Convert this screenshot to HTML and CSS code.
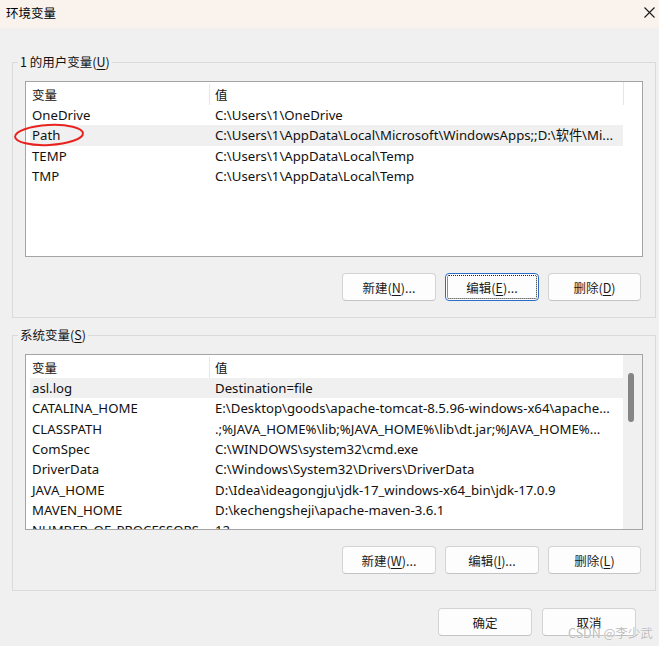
FILE: index.html
```html
<!DOCTYPE html>
<html lang="zh-CN">
<head>
<meta charset="utf-8">
<title>环境变量</title>
<link rel="stylesheet" href="styles.css">
</head>
<body>
<div class="window">
  <div class="titlebar">
    <span class="title">环境变量</span>
    <svg class="close" width="11" height="11" viewBox="0 0 11 11"><path d="M0.5 0.5L10.5 10.5M10.5 0.5L0.5 10.5" stroke="#1a1a1a" stroke-width="1.1" fill="none"/></svg>
  </div>
  <div class="content">
    <fieldset class="group">
      <legend>1 的用户变量(<u>U</u>)</legend>
      <div class="list">
        <div class="cols">
          <div class="header"><div class="c1">变量</div><div class="c2">值</div></div>
          <div class="row"><div class="c1">OneDrive</div><div class="c2">C:\Users\1\OneDrive</div></div>
          <div class="row sel"><div class="c1">Path</div><div class="c2">C:\Users\1\AppData\Local\Microsoft\WindowsApps;;D:\软件\Mi...</div></div>
          <div class="row"><div class="c1">TEMP</div><div class="c2">C:\Users\1\AppData\Local\Temp</div></div>
          <div class="row"><div class="c1">TMP</div><div class="c2">C:\Users\1\AppData\Local\Temp</div></div>
        </div>
        <div class="side"><div class="side-head"></div></div>
      </div>
      <div class="buttons">
        <button class="btn">新建(<u>N</u>)...</button>
        <button class="btn focus">编辑(<u>E</u>)...</button>
        <button class="btn last">删除(<u>D</u>)</button>
      </div>
    </fieldset>
    <fieldset class="group second">
      <legend>系统变量(<u>S</u>)</legend>
      <div class="list">
        <div class="cols">
          <div class="header"><div class="c1">变量</div><div class="c2">值</div></div>
          <div class="row sel"><div class="c1">asl.log</div><div class="c2">Destination=file</div></div>
          <div class="row"><div class="c1">CATALINA_HOME</div><div class="c2">E:\Desktop\goods\apache-tomcat-8.5.96-windows-x64\apache...</div></div>
          <div class="row"><div class="c1">CLASSPATH</div><div class="c2">.;%JAVA_HOME%\lib;%JAVA_HOME%\lib\dt.jar;%JAVA_HOME%...</div></div>
          <div class="row"><div class="c1">ComSpec</div><div class="c2">C:\WINDOWS\system32\cmd.exe</div></div>
          <div class="row"><div class="c1">DriverData</div><div class="c2">C:\Windows\System32\Drivers\DriverData</div></div>
          <div class="row"><div class="c1">JAVA_HOME</div><div class="c2">D:\Idea\ideagongju\jdk-17_windows-x64_bin\jdk-17.0.9</div></div>
          <div class="row"><div class="c1">MAVEN_HOME</div><div class="c2">D:\kechengsheji\apache-maven-3.6.1</div></div>
          <div class="row"><div class="c1">NUMBER_OF_PROCESSORS</div><div class="c2">12</div></div>
        </div>
        <div class="side scroll"><div class="thumb"></div></div>
      </div>
      <div class="buttons">
        <button class="btn">新建(<u>W</u>)...</button>
        <button class="btn">编辑(<u>I</u>)...</button>
        <button class="btn last">删除(<u>L</u>)</button>
      </div>
    </fieldset>
    <div class="footer">
      <button class="btn">确定</button>
      <button class="btn">取消</button>
    </div>
  </div>
  <svg class="mark" width="74" height="26" viewBox="0 0 74 26"><ellipse cx="37" cy="13" rx="34" ry="10" fill="none" stroke="#e8231e" stroke-width="2" transform="rotate(-3 37 13)"/></svg>
  <div class="watermark">CSDN @李少武</div>
</div>
</body>
</html>
```
FILE: styles.css
```css
* { box-sizing: border-box; }
html, body { margin: 0; padding: 0; }
body {
  width: 659px;
  height: 646px;
  overflow: hidden;
  background: #f0f0f0;
  font-family: "Noto Sans", "Noto Sans CJK SC", sans-serif;
  font-size: 12px;
  color: #111;
}
.window {
  position: relative;
  width: 659px;
  height: 646px;
}
.titlebar {
  height: 28px;
  background: #faf2ec;
  display: flex;
  align-items: center;
  justify-content: space-between;
  padding: 0 4px 4px 6px;
}
.title {
  font-family: "Noto Sans CJK SC", sans-serif;
  font-size: 12.5px;
  color: #000;
}
.close { display: block; margin-top: 0; }
.content {
  padding: 26px 3px 0 12px;
}
.group {
  margin: 0;
  padding: 11px 12px 16px 12px;
  border: 1px solid #dadada;
  min-width: 0;
}
.group.second { margin-top: 9px; }
legend {
  font-family: "Noto Sans CJK SC", sans-serif;
  font-size: 12.5px;
  line-height: 16px;
  padding: 0 2px;
  margin-left: -7px;
  color: #111;
}
u { text-decoration: underline; text-underline-offset: 2px; }
.list {
  height: 176px;
  border: 1px solid #a4a4a4;
  background: #fff;
  display: flex;
  overflow: hidden;
}
.cols {
  width: 597px;
  overflow: hidden;
}
.header {
  display: flex;
  height: 23px;
  padding-top: 2px;
}
.header .c1 {
  width: 184px;
  padding-left: 6px;
  border-right: 1px solid #e6e6e6;
  font-family: "Noto Sans CJK SC", sans-serif;
  font-size: 12.5px;
  line-height: 21px;
}
.header .c2 {
  padding-left: 5px;
  font-family: "Noto Sans CJK SC", sans-serif;
  font-size: 12.5px;
  line-height: 21px;
}
.row {
  display: flex;
  height: 20.33px;
  line-height: 20px;
  margin-left: 4px;
  white-space: nowrap;
  font-size: 13.2px;
}
.row.sel { background: #f0f0f0; }
.row .c1 {
  width: 180px;
  flex: none;
  padding-left: 2px;
  overflow: hidden;
}
.row .c2 {
  flex: 1;
  padding-left: 5px;
  padding-right: 2px;
  overflow: hidden;
}
.side {
  width: 19px;
  flex: none;
}
.side-head {
  height: 23px;
  padding-top: 2px;
  border-left: 1px solid #e6e6e6;
  background-clip: content-box;
}
.scroll {
  background: #f0f0f0;
  padding: 18px 0 0 5px;
}
.thumb {
  width: 6px;
  height: 49px;
  background: #858585;
  border-radius: 3px;
}
.buttons {
  display: flex;
  justify-content: flex-end;
  gap: 9px;
  margin-top: 16px;
  padding-right: 2px;
}
.btn {
  width: 94px;
  height: 28px;
  padding: 0;
  background: #fdfdfd;
  border: 1px solid #d3d3d3;
  border-bottom-color: #c4c4c4;
  border-radius: 4px;
  font-family: "Noto Sans CJK SC", "Noto Sans", sans-serif;
  font-size: 12.5px;
  color: #1a1a1a;
}
.btn.last { width: 93px; }
.btn.focus {
  border-color: #2d6cc8;
  outline: 1px dotted #222;
  outline-offset: -3px;
}
.footer {
  display: flex;
  justify-content: flex-end;
  gap: 10px;
  margin-top: 17px;
  padding-right: 20px;
}
.mark {
  position: absolute;
  left: 12px;
  top: 122px;
}
.watermark {
  position: absolute;
  left: 568px;
  top: 623px;
  font-family: "Noto Sans CJK SC", sans-serif;
  font-size: 12.5px;
  color: rgba(180, 180, 180, 0.9);
  text-shadow: 0 0 1px #fff;
}
```
